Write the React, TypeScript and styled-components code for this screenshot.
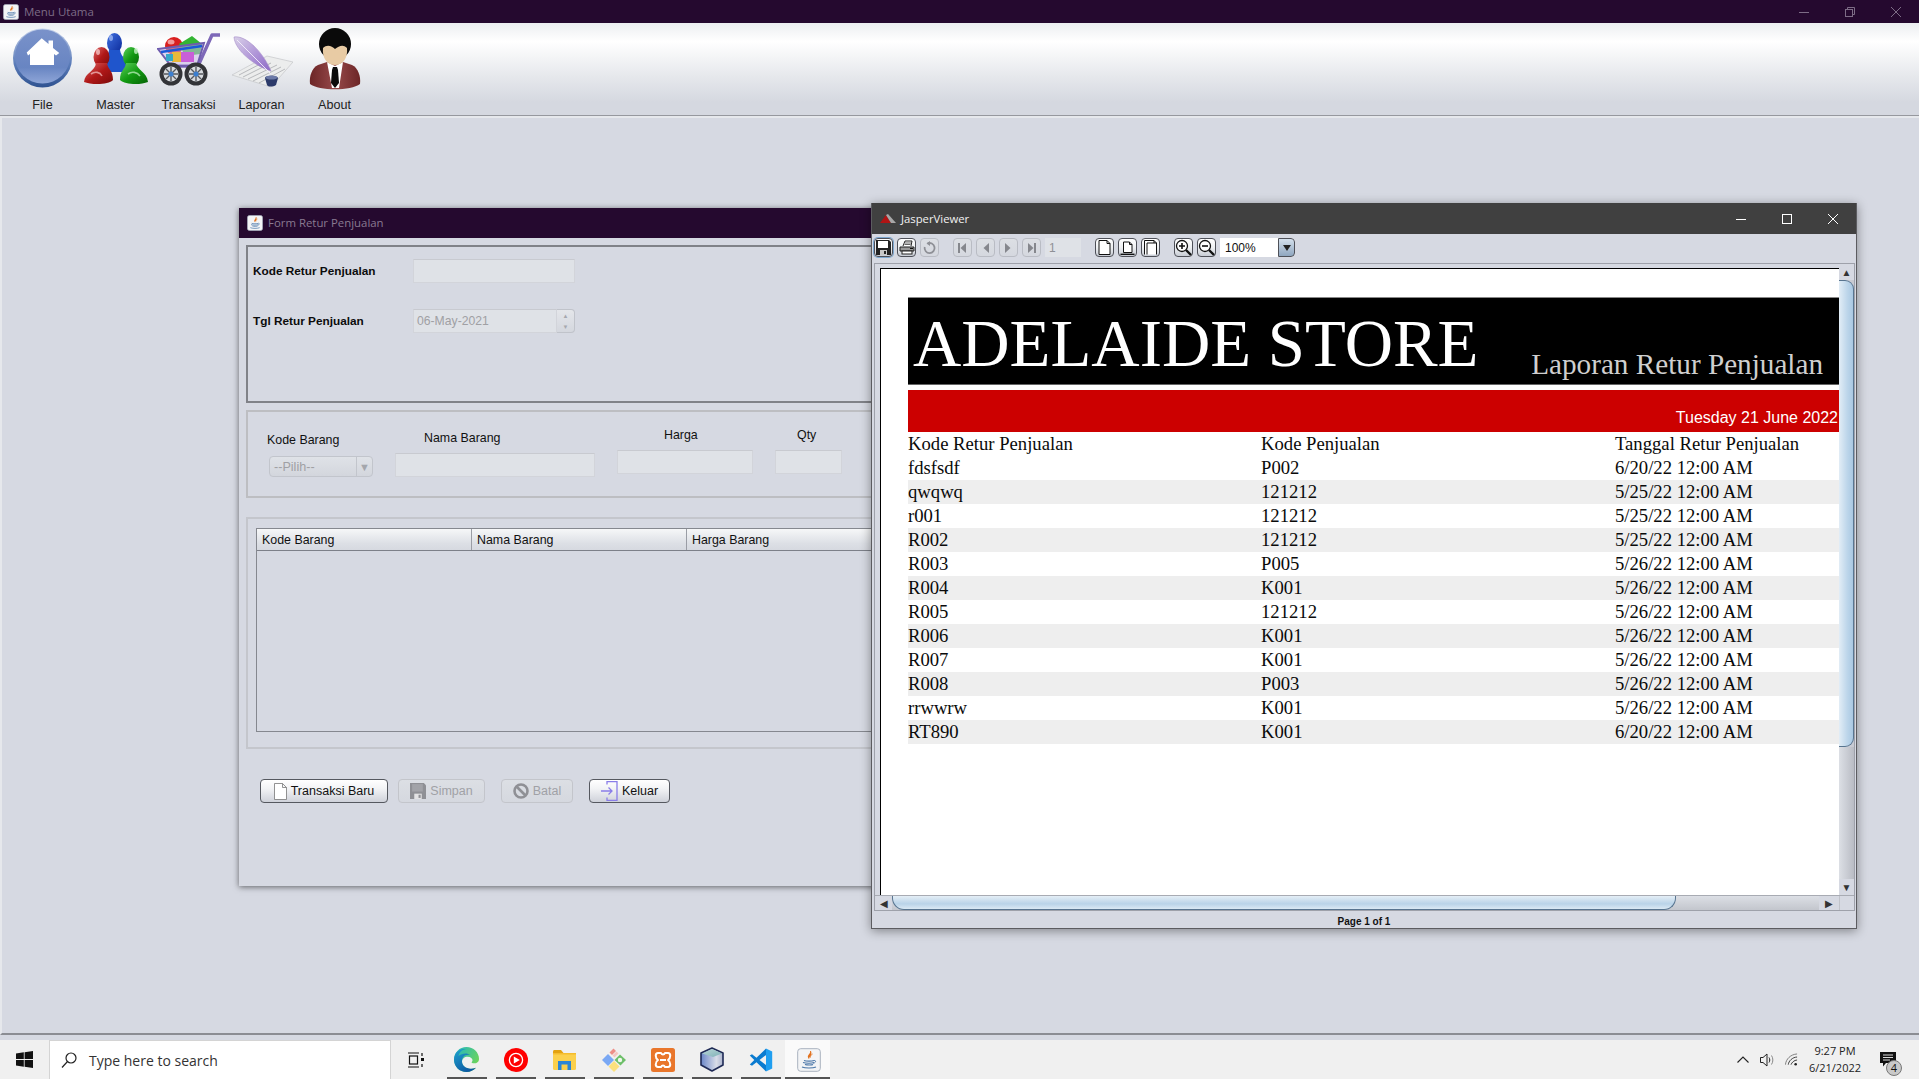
import React from 'react'
import styled, { createGlobalStyle } from 'styled-components'

const GlobalStyle = createGlobalStyle`
  html, body {
    margin: 0;
    padding: 0;
    background: #d6d9e2;
    overflow: hidden;
  }
  * {
    box-sizing: border-box;
  }
`

const Screen = styled.div`
  width: 1919px;
  height: 1079px;
  display: flex;
  flex-direction: column;
  font-family: 'Liberation Sans', Arial, sans-serif;
  font-size: 12px;
  color: #111;
  overflow: hidden;
`

const AppTitleBar = styled.div`
  height: 23px;
  flex: none;
  display: flex;
  align-items: center;
  background: #25092f;
  color: #7d6c86;
  font-family: 'Open Sans', sans-serif;
  font-size: 11.5px;
  padding-left: 3px;
`

const TitleText = styled.span`
  margin-left: 5px;
  flex: 1;
`

const WinControl = styled.div<{ $dark?: boolean }>`
  width: 46px;
  display: flex;
  justify-content: center;
  align-items: center;
  color: ${(p) => (p.$dark ? '#7d6c86' : '#ffffff')};
`

const MenuBar = styled.div`
  height: 93px;
  flex: none;
  display: flex;
  padding-left: 6px;
  background: linear-gradient(#eceef1 0, #ffffff 20%, #e6e8ec 58%, #d5d8e0 86%);
  border-bottom: 1px solid #96989e;
`

const MenuItem = styled.div`
  width: 73px;
  display: flex;
  flex-direction: column;
  align-items: center;
`

const MenuIconBox = styled.div<{ $pb: number }>`
  height: 70px;
  display: flex;
  align-items: flex-end;
  padding-bottom: ${(p) => p.$pb}px;
`

const MenuLabel = styled.div`
  margin-top: 5px;
  font-size: 12.6px;
  color: #222;
  line-height: 14px;
`

const Desktop = styled.div`
  position: relative;
  flex: 1;
  background: #d6d9e2;
  border-top: 2px solid #e6e8ec;
  border-left: 2px solid #e6e8ec;
  border-bottom: 2px solid #8b8d93;
  margin-bottom: 5px;
`

/* windows sit on the desktop at free positions */
const FormWindow = styled.div`
  position: absolute;
  left: 237px;
  top: 90px;
  width: 700px;
  height: 678px;
  background: #d6d9e2;
  box-shadow: 0 1px 6px rgba(0, 0, 0, 0.55);
  overflow: hidden;
`

const FormTitle = styled.div`
  height: 30px;
  display: flex;
  align-items: center;
  padding: 0 0 1px 8px;
  background: #25092f;
  color: #897a91;
  font-family: 'Open Sans', sans-serif;
  font-size: 11.4px;
`

const FormTitleText = styled.span`
  margin-left: 5px;
`

const FormBody = styled.div`
  padding: 7px 0 0 7px;
  display: flex;
  flex-direction: column;
  width: 900px;
`

const HeadPanel = styled.div`
  height: 158px;
  border: 2px solid #808288;
  padding: 12px 0 0 5px;
  display: flex;
  flex-direction: column;
  gap: 26px;
`

const HeadRow = styled.div`
  display: flex;
  align-items: center;
`

const BoldLabel = styled.div`
  width: 160px;
  font-weight: 700;
  font-size: 11.8px;
  color: #0c0c0c;
`

const DisabledInput = styled.div<{ $w: number; $h?: number }>`
  width: ${(p) => p.$w}px;
  height: ${(p) => p.$h ?? 24}px;
  flex: none;
  background: #dfe2e7;
  border: 1px solid #d2d4da;
  border-top-color: #c8cad0;
  color: #a0a0a4;
  padding-left: 3px;
  display: flex;
  align-items: center;
  font-size: 12.2px;
`

const Spinner = styled.div`
  width: 18px;
  height: 24px;
  display: flex;
  flex-direction: column;
  border: 1px solid #c0c3ca;
  border-left: 0;
  border-radius: 0 4px 4px 0;
  background: linear-gradient(#e4e6ea, #d4d7de);
  color: #a6a8ae;
  font-size: 6px;
  align-items: center;
  justify-content: space-around;
`

const EntryPanel = styled.div`
  height: 88px;
  margin-top: 7px;
  border: 2px solid #bdbec2;
  padding-left: 19px;
  display: flex;
  gap: 22px;
`

const Field = styled.div<{ $top: number; $gap: number }>`
  display: flex;
  flex-direction: column;
  padding-top: ${(p) => p.$top}px;
  gap: ${(p) => p.$gap}px;
`

const FieldLabel = styled.div<{ $indent: number }>`
  margin-left: ${(p) => p.$indent}px;
  line-height: 14px;
  font-size: 12.4px;
  color: #111;
`

const Combo = styled.div`
  width: 104px;
  height: 21px;
  margin-left: 2px;
  display: flex;
  align-items: center;
  justify-content: space-between;
  border: 1px solid #c2c5cc;
  border-radius: 4px;
  background: linear-gradient(#dfe2e7, #d3d6dd);
  color: #a0a0a4;
  font-size: 12.6px;
  padding-left: 4px;
`

const ComboArrow = styled.div`
  width: 16px;
  height: 100%;
  border-left: 1px solid #c2c5cc;
  display: flex;
  align-items: center;
  justify-content: center;
  color: #a4a6ac;
  font-size: 11px;
`

const TablePanel = styled.div`
  height: 232px;
  margin-top: 19px;
  border: 2px solid #c4c6cc;
  border-right: 0;
  padding: 9px 0 0 8px;
`

const TableFrame = styled.div`
  height: 204px;
  border: 1px solid #85888f;
`

const TableHead = styled.div`
  height: 22px;
  display: flex;
  border-bottom: 1px solid #7d8089;
  background: linear-gradient(#f6f7f8, #dcdfe5 70%, #d6d9e0);
`

const TableHeadCell = styled.div`
  width: 215px;
  padding-left: 5px;
  display: flex;
  align-items: center;
  border-right: 1px solid #9a9da5;
  font-size: 12.4px;
`

const ButtonRow = styled.div`
  display: flex;
  margin: 30px 0 0 14px;
`

const ActionButton = styled.button<{ $w: number; $ml?: number }>`
  width: ${(p) => p.$w}px;
  height: 24px;
  margin-left: ${(p) => p.$ml ?? 0}px;
  display: flex;
  align-items: center;
  justify-content: center;
  gap: 4px;
  padding: 0;
  font-family: 'Liberation Sans', Arial, sans-serif;
  font-size: 12.5px;
  color: #111;
  border: 1px solid #55585f;
  border-radius: 4px;
  background: linear-gradient(#ffffff, #f2f3f5 40%, #cfd2da);
  &:disabled {
    color: #a0a1a6;
    border-color: #c3c5cb;
    background: linear-gradient(#dcdfe4, #d5d8df);
  }
`

const JasperWindow = styled.div`
  position: absolute;
  left: 869px;
  top: 85px;
  width: 986px;
  height: 726px;
  display: flex;
  flex-direction: column;
  background: #d6d9e2;
  border: 1px solid #5c5c60;
  border-top: 0;
  box-shadow: 0 2px 10px rgba(0, 0, 0, 0.4);
`

const JasperTitle = styled.div`
  height: 31px;
  flex: none;
  display: flex;
  align-items: center;
  padding-left: 8px;
  background: #404040;
  color: #f2f2f2;
  font-family: 'Open Sans', sans-serif;
  font-size: 11.3px;
`

const JasperTitleText = styled.span`
  margin-left: 5px;
  flex: 1;
`

const Toolbar = styled.div`
  height: 29px;
  flex: none;
  display: flex;
  align-items: center;
  gap: 14px;
  padding: 0 0 2px 2px;
`

const ToolGroup = styled.div`
  display: flex;
  gap: 4px;
`

const ToolButton = styled.div<{ $off?: boolean; $focus?: boolean }>`
  width: 19px;
  height: 19px;
  display: flex;
  align-items: center;
  justify-content: center;
  border-radius: 4px;
  border: 1px solid ${(p) => (p.$off ? '#b9bcc4' : '#4e5058')};
  background: ${(p) =>
    p.$off ? 'linear-gradient(#dcdfe4, #d5d8df)' : 'linear-gradient(#ffffff, #eef0f2 50%, #c8ccd4)'};
  color: ${(p) => (p.$off ? '#8e9096' : '#111')};
  box-shadow: ${(p) => (p.$focus ? '0 0 0 1px #7da7cf' : 'none')};
`

const PageInput = styled.div`
  width: 36px;
  height: 19px;
  padding-left: 4px;
  display: flex;
  align-items: center;
  background: #dfe2e7;
  color: #8e9096;
  font-size: 12px;
`

const ZoomCombo = styled.div`
  width: 75px;
  height: 19px;
  display: flex;
  border-radius: 0 4px 4px 0;
  background: #fff;
`

const ZoomValue = styled.div`
  flex: 1;
  padding-left: 5px;
  display: flex;
  align-items: center;
  font-size: 12px;
`

const ZoomArrow = styled.div`
  width: 17px;
  display: flex;
  align-items: center;
  justify-content: center;
  border: 1px solid #4e5058;
  border-radius: 0 4px 4px 0;
  background: linear-gradient(#d4e0ec, #8fa6bf);
`

const ArrowDown = styled.div`
  width: 0;
  height: 0;
  border-left: 4px solid transparent;
  border-right: 4px solid transparent;
  border-top: 6px solid #222;
`

const ViewerFrame = styled.div`
  height: 648px;
  flex: none;
  margin: 0 1px 0 2px;
  border: 1px solid #9ea1aa;
  display: flex;
  flex-direction: column;
`

const ViewerMain = styled.div`
  flex: 1;
  display: flex;
  min-height: 0;
`

const PageArea = styled.div`
  flex: 1;
  padding: 4px 0 0 5px;
`

const Page = styled.div`
  height: 100%;
  background: #fff;
  border-top: 1px solid #000;
  border-left: 1px solid #000;
  padding: 28px 0 0 27px;
`

const Banner = styled.div`
  height: 88px;
  display: flex;
  justify-content: space-between;
  background: #000;
  border-top: 1px solid #888;
  border-bottom: 1px solid #666;
  font-family: 'Liberation Serif', 'Times New Roman', serif;
`

const StoreName = styled.div`
  color: #fff;
  font-size: 66.9px;
  line-height: 76px;
  padding: 7px 0 0 5px;
`

const ReportName = styled.div`
  color: #cfcfcf;
  font-size: 29.2px;
  line-height: 34px;
  padding: 49px 16px 0 0;
`

const DateBand = styled.div`
  height: 42px;
  margin-top: 5px;
  background: #cc0000;
  color: #fff;
  font-size: 16px;
  display: flex;
  align-items: flex-end;
  justify-content: flex-end;
  padding: 0 1px 5px 0;
`

const Row = styled.div<{ $alt?: boolean }>`
  height: 24px;
  display: grid;
  grid-template-columns: 353px 354px 1fr;
  align-items: center;
  font-family: 'Liberation Serif', 'Times New Roman', serif;
  font-size: 18.67px;
  color: #0a0a0a;
  background: ${(p) => (p.$alt ? '#eeeeee' : 'transparent')};
`

const VScroll = styled.div`
  width: 15px;
  flex: none;
  display: flex;
  flex-direction: column;
  background: linear-gradient(90deg, #d6d9e2, #c6c9d1);
`

const ScrollBtn = styled.div<{ $h?: number; $w?: number }>`
  height: ${(p) => (p.$h ? p.$h + 'px' : 'auto')};
  width: ${(p) => (p.$w ? p.$w + 'px' : 'auto')};
  flex: none;
  display: flex;
  align-items: center;
  justify-content: center;
  color: #333;
  font-size: 10px;
  background: #d6d9e2;
`

const VThumb = styled.div`
  height: 467px;
  flex: none;
  border: 1px solid #587590;
  border-left: 0;
  border-radius: 0 9px 9px 0;
  background: linear-gradient(90deg, #e2edf6, #bcd5ea 60%, #a9c8e2);
`

const VTrack = styled.div`
  flex: 1;
  background: linear-gradient(90deg, #dcdfe5, #b9bcc4);
`

const HScroll = styled.div`
  height: 15px;
  flex: none;
  display: flex;
  background: linear-gradient(#dcdfe5, #c3c6cd);
  border-top: 1px solid #a8abb3;
`

const HThumb = styled.div`
  width: 784px;
  flex: none;
  border: 1px solid #587590;
  border-top: 0;
  border-radius: 0 0 12px 12px;
  background: linear-gradient(#e4eef6, #b9d3e8 60%, #dbe9f4);
`

const HTrack = styled.div`
  flex: 1;
`

const Corner = styled.div`
  width: 15px;
  flex: none;
  background: #d6d9e2;
  border-left: 1px solid #c0c3ca;
`

const StatusBar = styled.div`
  flex: 1;
  display: flex;
  align-items: center;
  justify-content: center;
  font-size: 10px;
  font-weight: 700;
  padding: 3px 0 0 0;
`

const Taskbar = styled.div`
  height: 39px;
  flex: none;
  display: flex;
  background: #f0f0f0;
`

const StartButton = styled.div`
  width: 49px;
  display: flex;
  align-items: center;
  justify-content: center;
  padding-bottom: 1px;
`

const SearchBox = styled.div`
  width: 342px;
  display: flex;
  align-items: center;
  gap: 12px;
  padding-left: 11px;
  background: #fff;
  border: 1px solid #d4d4d4;
  border-bottom: 0;
  font-family: 'Open Sans', sans-serif;
  font-size: 14px;
  color: #333;
`

const Slots = styled.div`
  display: flex;
  margin-left: 2px;
`

const Slot = styled.div<{ $running?: boolean; $active?: boolean }>`
  position: relative;
  width: ${(p) => (p.$active ? '45px' : '49px')};
  display: flex;
  align-items: center;
  justify-content: center;
  padding-left: ${(p) => (p.$active ? '3px' : '0')};
  background: ${(p) => (p.$active ? '#fafafa' : 'transparent')};
  &::after {
    content: '';
    display: ${(p) => (p.$running ? 'block' : 'none')};
    position: absolute;
    bottom: 0;
    left: ${(p) => (p.$active ? '0' : '4.5px')};
    right: ${(p) => (p.$active ? '0' : '4.5px')};
    height: 2px;
    background: #555;
  }
`

const TaskViewWrap = styled.div`
  margin-right: 3px;
  display: flex;
`

const Tray = styled.div`
  margin-left: auto;
  display: flex;
  align-items: center;
  padding-right: 15px;
  color: #222;
`

const TrayIcon = styled.div<{ $w: number }>`
  width: ${(p) => p.$w}px;
  display: flex;
  justify-content: center;
`

const Clock = styled.div`
  width: 74px;
  text-align: center;
  font-family: 'Open Sans', sans-serif;
  font-size: 11px;
  line-height: 17px;
  color: #222;
  padding-bottom: 1px;
`

const NotifyWrap = styled.div`
  position: relative;
  width: 32px;
  height: 20px;
  display: flex;
  align-items: center;
  justify-content: center;
`

const NotifyBadge = styled.div`
  position: absolute;
  left: 14px;
  top: 10px;
  width: 16px;
  height: 16px;
  border-radius: 50%;
  background: #c9c9c9;
  border: 1px solid #777;
  display: flex;
  align-items: center;
  justify-content: center;
  font-family: 'Open Sans', sans-serif;
  font-size: 11px;
  color: #111;
`

/* ---- drawings ---- */

const JavaIcon = ({ size = 16 }: { size?: number }) => (
  <svg width={size} height={size} viewBox="0 0 24 24">
    <rect x="0.7" y="0.7" width="22.6" height="22.6" rx="3" fill="#f3f4f6" stroke="#a9b2bf" />
    <path d="M13 3c1 2.5-3 4-2 6.5.4 1 1.2 1.5 1.2 1.5-.4-2 3.5-3.5 1.8-8z" fill="#e2711d" />
    <path d="M15.5 6c-1.5 1-2.5 2-2 3.5" stroke="#e2711d" strokeWidth="0.9" fill="none" />
    <path d="M7 12.5c2 .8 8 .8 10 0M6 14.5c3 .9 9 .9 11 0M8 16.5c2 .7 7 .7 8 0" stroke="#4a76a8" strokeWidth="1.1" fill="none" />
    <path d="M17 12.5c2-.5 2.5 2-.8 2.8" stroke="#4a76a8" strokeWidth="0.9" fill="none" />
    <path d="M5 19c3 1.4 11 1.4 14 0" stroke="#4a76a8" strokeWidth="1.1" fill="none" />
  </svg>
)

const HomeIcon = () => (
  <svg width="60" height="62" viewBox="12 28 60 62">
    <defs>
      <linearGradient id="homeRim" x1="0" y1="0" x2="0" y2="1">
        <stop offset="0" stopColor="#c3d0ea" />
        <stop offset="0.6" stopColor="#5b7cb9" />
        <stop offset="1" stopColor="#2f5290" />
      </linearGradient>
      <linearGradient id="homeFace" x1="0" y1="0" x2="0" y2="1">
        <stop offset="0" stopColor="#7a92ca" />
        <stop offset="0.7" stopColor="#6885c2" />
        <stop offset="1" stopColor="#8fa6d8" />
      </linearGradient>
    </defs>
    <circle cx="41.5" cy="58" r="29.5" fill="url(#homeRim)" />
    <ellipse cx="41.5" cy="56.5" rx="27.5" ry="27" fill="url(#homeFace)" />
    <path d="M40.7 38.3 L47.5 44 V40.5 H52 V48 L58.3 53 L55 55.5 L53 54 V65 H29 V54 L27 55.5 L25.7 52.5 Z" fill="#fff" />
  </svg>
)

const PeopleIcon = () => (
  <svg width="64" height="54" viewBox="83 32 64 54">
    <defs>
      <linearGradient id="pBlue" x1="0" y1="0" x2="1" y2="1">
        <stop offset="0" stopColor="#3f6fe0" />
        <stop offset="1" stopColor="#0b2a9a" />
      </linearGradient>
      <linearGradient id="pRed" x1="0" y1="0" x2="1" y2="1">
        <stop offset="0" stopColor="#e06a6a" />
        <stop offset="0.5" stopColor="#b01818" />
        <stop offset="1" stopColor="#7c0a0a" />
      </linearGradient>
      <linearGradient id="pGreen" x1="0" y1="0" x2="1" y2="1">
        <stop offset="0" stopColor="#5ed05e" />
        <stop offset="0.5" stopColor="#129a12" />
        <stop offset="1" stopColor="#066406" />
      </linearGradient>
    </defs>
    <ellipse cx="113.5" cy="43" rx="7.5" ry="10" fill="url(#pBlue)" />
    <path d="M108 50 H119 C120 58 128 60 130 72 H100 C100 62 107 58 108 50z" fill="#1f55cc" />
    <ellipse cx="100.5" cy="57" rx="8" ry="10" fill="url(#pRed)" />
    <path d="M95 63 H106 C107 70 112 70 112 80 C108 85 90 85 83 82 C84 72 94 72 95 63z" fill="url(#pRed)" />
    <ellipse cx="130" cy="57" rx="8" ry="10" fill="url(#pGreen)" />
    <path d="M125 63 H135 C136 70 146 72 147 82 C140 85 124 85 119 80 C119 70 124 70 125 63z" fill="url(#pGreen)" />
    <ellipse cx="110" cy="38" rx="2" ry="3" fill="#9db6f2" opacity="0.8" />
    <ellipse cx="97" cy="52" rx="2" ry="3" fill="#f5c4c4" opacity="0.8" />
    <ellipse cx="135" cy="51" rx="2" ry="3" fill="#c5f2c5" opacity="0.8" />
    <path d="M90 74 C94 71 99 72 101 76" stroke="#f5c4c4" strokeWidth="1.6" fill="none" opacity="0.7" />
    <path d="M127 74 C131 71 136 72 139 76" stroke="#c5f2c5" strokeWidth="1.6" fill="none" opacity="0.7" />
  </svg>
)

const Wheel = ({ cx }: { cx: number }) => (
  <g>
    <circle cx={cx} cy="74" r="11.5" fill="#333438" />
    <circle cx={cx} cy="74" r="7.5" fill="#d7dade" />
    <path d={`M${cx - 7} 74H${cx + 7}M${cx} 67V81M${cx - 5} 69L${cx + 5} 79M${cx + 5} 69L${cx - 5} 79`} stroke="#55585e" strokeWidth="1.4" />
    <circle cx={cx} cy="74" r="2.5" fill="#3c7fd0" />
  </g>
)

const CartIcon = () => (
  <svg width="64" height="55" viewBox="156 32 64 55">
    <path d="M219 35 H211 L197 66 H170" fill="none" stroke="#7d68b8" strokeWidth="3.4" strokeLinejoin="round" />
    <circle cx="173" cy="46" r="9" fill="#d92020" />
    <ellipse cx="170" cy="42" rx="3.5" ry="2.5" fill="#f29a9a" />
    <path d="M178 44 L191 36 L201 44 L199 54 L184 56z" fill="#33b533" />
    <path d="M157 49 L203 43 L196 66 H170 Z" fill="#c6b8e6" fillOpacity="0.55" stroke="#6f5cae" strokeWidth="2" />
    <path d="M160 52 L201 46" stroke="#1b58d8" strokeWidth="2.4" />
    <rect x="171" y="52" width="11" height="10" fill="#e8b93c" />
    <rect x="180" y="52" width="13" height="10" fill="#c95fd8" />
    <rect x="165" y="54" width="7" height="7" fill="#35a8c8" />
    <Wheel cx={170} />
    <Wheel cx={195} />
  </svg>
)

const QuillIcon = () => (
  <svg width="62" height="54" viewBox="230 34 62 54">
    <defs>
      <linearGradient id="feather" x1="0" y1="0" x2="1" y2="1">
        <stop offset="0" stopColor="#d8cfe8" />
        <stop offset="0.6" stopColor="#ab8fd6" />
        <stop offset="1" stopColor="#8d6cc6" />
      </linearGradient>
    </defs>
    <path d="M231 75 L266 56 L292 62 L270 87 Z" fill="#eceded" stroke="#c4c5c8" strokeWidth="0.7" />
    <path d="M238 75 L265 61M242 77 L270 63M247 79 L276 65M252 81 L280 67M258 83 L284 69" stroke="#a9abaf" strokeWidth="0.8" />
    <path d="M233 37 C245 35 262 52 270 71 C258 68 234 52 233 37z" fill="url(#feather)" stroke="#a48bc8" strokeWidth="0.6" />
    <path d="M236 40 L270 74" stroke="#f4f0fa" strokeWidth="0.9" />
    <path d="M264 78 C264 75 276 75 277 78 L275 85 C272 87 267 87 266 85z" fill="#2c3a6a" />
    <ellipse cx="270.5" cy="77.5" rx="6" ry="2" fill="#6c7aa8" />
  </svg>
)

const ManIcon = () => (
  <svg width="52" height="64" viewBox="308 27 52 64">
    <defs>
      <linearGradient id="jacket" x1="0" y1="0" x2="1" y2="0">
        <stop offset="0" stopColor="#6c2526" />
        <stop offset="0.5" stopColor="#96494a" />
        <stop offset="1" stopColor="#6c2526" />
      </linearGradient>
    </defs>
    <path d="M309 84 C308 76 311 68 317 65 L326 62 H342 L351 65 C357 68 360 76 359 84 C350 91 318 91 309 84z" fill="url(#jacket)" />
    <path d="M326 62 L331 88 H338 L342 62 L334 66z" fill="#fff" />
    <path d="M332 67 H336 L337 70 L338 83 L334 88 L330 83 L331 70z" fill="#0c0c0c" />
    <circle cx="334" cy="44" r="16" fill="#0a0a0a" />
    <path d="M322 48 C326 44 331 46 334 49 C338 46 342 44 346 48 C347 58 342 65 334 65 C326 65 321 58 322 48z" fill="#e8cba4" />
  </svg>
)

const WindowsLogo = () => (
  <svg width="17" height="17" viewBox="0 0 17 17" fill="#111">
    <path d="M0 2.4 L7.8 1.3 V8 H0z" />
    <path d="M8.6 1.2 L17 0 V8 H8.6z" />
    <path d="M0 9 H7.8 V15.7 L0 14.6z" />
    <path d="M8.6 9 H17 V17 L8.6 15.8z" />
  </svg>
)

const SearchGlass = () => (
  <svg width="16" height="17" viewBox="0 0 16 17" fill="none" stroke="#222" strokeWidth="1.2">
    <circle cx="10" cy="6" r="5" />
    <path d="M6.5 9.5 L1 15.5" />
  </svg>
)

const TaskViewIcon = () => (
  <svg width="16" height="16" viewBox="0 0 16 16" fill="none" stroke="#111" strokeWidth="1.2">
    <path d="M0 1h11M0 15h11" />
    <rect x="1.5" y="4" width="8" height="8" />
    <path d="M14 1v3M14 12v3" />
    <rect x="13" y="6" width="3" height="3" fill="#111" stroke="none" />
  </svg>
)

const EdgeIcon = () => (
  <svg width="25" height="25" viewBox="0 0 25 25">
    <defs>
      <linearGradient id="edgeA" x1="0" y1="0" x2="0.6" y2="1">
        <stop offset="0" stopColor="#1fa3cf" />
        <stop offset="1" stopColor="#0c59a4" />
      </linearGradient>
      <linearGradient id="edgeB" x1="0" y1="0" x2="1" y2="0.6">
        <stop offset="0" stopColor="#1db4c7" />
        <stop offset="1" stopColor="#6fd558" />
      </linearGradient>
    </defs>
    <path d="M12.5 0C5.5 0 0 5.5 0 12.5S5.5 25 12.5 25c4 0 7-1.5 9.5-4.2-7 3-14 -.5-14-6 0-3 2.5-5 5.5-5 3.4 0 5 2 5 3.5 0 1-.6 1.8-1 2.2 2 1.6 7.5 1.3 7.5-3.5C25 5.5 19.5 0 12.5 0z" fill="url(#edgeB)" />
    <path d="M1 8C3 3 8 1.5 12 2c-5 1-7 4-7.5 7 3-3 9-3.5 12-1-6-1-8.5 2-8.5 6.5 0 5 6 9 14 6.3-2.5 2.7-5.5 4.2-9.5 4.2C5.5 25 0 19.5 0 12.5 0 11 .4 9.5 1 8z" fill="url(#edgeA)" />
  </svg>
)

const YtMusicIcon = () => (
  <svg width="24" height="24" viewBox="0 0 24 24">
    <circle cx="12" cy="12" r="12" fill="#f00" />
    <circle cx="12" cy="12" r="6.6" fill="none" stroke="#fff" strokeWidth="1.3" />
    <path d="M9.8 8.5 L15.8 12 L9.8 15.5z" fill="#fff" />
  </svg>
)

const ExplorerIcon = () => (
  <svg width="23" height="20" viewBox="0 0 23 20">
    <path d="M0 1.5C0 .6.6 0 1.5 0H8l2.5 3H0z" fill="#e3a210" />
    <rect x="0" y="3" width="23" height="17" rx="1.5" fill="#fbd04c" />
    <rect x="0" y="3" width="23" height="1.5" fill="#f5bc2c" />
    <path d="M5 11 H18 V20 H14.5 V14.5 H8.5 V20 H5z" fill="#2b86d6" />
  </svg>
)

const DiamondsIcon = () => (
  <svg width="24" height="24" viewBox="0 0 24 24">
    <path d="M0 12 L6 6 L12 12 L6 18z" fill="#7aa8f4" />
    <path d="M7.5 4.5 L11.5 .5 L14 3 L10 7z" fill="#ee8e86" />
    <path d="M10.5 7.5 L14.5 3.5 L16.5 5.5 L12.5 9.5z" fill="#f5c6c0" />
    <path d="M12.5 12 L18 6.5 L24 12 L18.5 17.5z" fill="#6dbf69" />
    <circle cx="18" cy="12" r="2.2" fill="#f2f7ee" />
    <path d="M6.5 18.5 L12 13 L17.5 18.5 L12 24z" fill="#fbe07c" />
  </svg>
)

const XamppIcon = () => (
  <svg width="24" height="24" viewBox="0 0 24 24">
    <rect width="24" height="24" rx="2.5" fill="#e9762b" />
    <path d="M7 5 H10 C11 7 13 7 14 5 H17 C20 5 20 10 17 12 C20 14 20 19 17 19 H14 C13 17 11 17 10 19 H7 C4 19 4 14 7 12 C4 10 4 5 7 5z M9 12 H15" fill="none" stroke="#fff" strokeWidth="2" strokeLinejoin="round" />
  </svg>
)

const CubeIcon = () => (
  <svg width="24" height="25" viewBox="0 0 24 25">
    <defs>
      <linearGradient id="cubeTop" x1="0" y1="0" x2="1" y2="1">
        <stop offset="0" stopColor="#b9d6d6" />
        <stop offset="1" stopColor="#7fb1b8" />
      </linearGradient>
      <linearGradient id="cubeSide" x1="0" y1="0" x2="1" y2="0">
        <stop offset="0" stopColor="#6a86c8" />
        <stop offset="0.7" stopColor="#d9dde8" />
        <stop offset="1" stopColor="#aab2cc" />
      </linearGradient>
    </defs>
    <path d="M12 1 L23 6 V18 L12 24 L1 18 V6z" fill="url(#cubeSide)" stroke="#1f2a55" strokeWidth="1.6" strokeLinejoin="round" />
    <path d="M12 2 L22 6.5 L13 10 L2 6.5z" fill="url(#cubeTop)" />
  </svg>
)

const VsCodeIcon = () => (
  <svg width="24" height="24" viewBox="0 0 24 24">
    <path d="M17 .5 L7.5 9.8 L3 6.3 L.8 7.5 L5.3 12 L.8 16.5 L3 17.7 L7.5 14.2 L17 23.5z M17 7 L10.5 12 L17 17z" fill="#0a7bd0" fillRule="evenodd" />
    <path d="M17 .5 L23.2 3.5 V20.5 L17 23.5z" fill="#1f9ef0" />
  </svg>
)

const SpeakerIcon = () => (
  <svg width="15" height="14" viewBox="0 0 15 14" fill="none" stroke="#222" strokeWidth="1">
    <path d="M.5 4.5 H3 L7 1 V13 L3 9.5 H.5z" />
    <path d="M9 4.5c1 1.5 1 3.5 0 5" />
    <path d="M11.5 2.5c1.8 2.8 1.8 6.2 0 9" stroke="#888" />
  </svg>
)

const WifiIcon = () => (
  <svg width="14" height="14" viewBox="0 0 14 14" fill="none" stroke="#333" strokeWidth="1">
    <path d="M.5 12C1 6 6 1 13 .5" stroke="#777" />
    <path d="M3.5 12C4 8 8 4 13 3.8" />
    <path d="M6.5 12C7 10 10 7 13 7" />
    <circle cx="11.5" cy="11.5" r="1.4" fill="#222" stroke="none" />
  </svg>
)

const ChevronIcon = () => (
  <svg width="12" height="7" viewBox="0 0 12 7" fill="none" stroke="#222" strokeWidth="1.1">
    <path d="M.5 6.5 L6 1 L11.5 6.5" />
  </svg>
)

const NotifyIcon = () => (
  <svg width="16" height="15" viewBox="0 0 16 15">
    <path d="M0 0 H16 V11 H6 L3 14.5 V11 H0z" fill="#111" />
    <path d="M3 3 H13M3 5.5 H13M3 8 H10" stroke="#f0f0f0" strokeWidth="0.9" />
  </svg>
)

const MinGlyph = () => (
  <svg width="10" height="10" viewBox="0 0 10 10" stroke="currentColor" fill="none">
    <path d="M0 5.5 H10" />
  </svg>
)

const MaxGlyph = () => (
  <svg width="10" height="10" viewBox="0 0 10 10" stroke="currentColor" fill="none">
    <rect x="0.5" y="0.5" width="9" height="9" />
  </svg>
)

const RestoreGlyph = () => (
  <svg width="10" height="10" viewBox="0 0 10 10" stroke="currentColor" fill="none">
    <rect x="0.5" y="2.5" width="7" height="7" />
    <path d="M2.5 2.5 V.5 H9.5 V7.5 H7.5" />
  </svg>
)

const CloseGlyph = () => (
  <svg width="10" height="10" viewBox="0 0 10 10" stroke="currentColor" fill="none">
    <path d="M0 0 L10 10M10 0 L0 10" />
  </svg>
)

const JasperLogo = () => (
  <svg width="16" height="9" viewBox="0 0 16 9">
    <path d="M0 9 L6 1 L11 9z" fill="#b01414" />
    <path d="M6 1 L8 0 L16 9 H11z" fill="#a8a8a8" />
  </svg>
)

const FloppyIcon = ({ fill = '#222', pane = '#fff', size = 15 }: { fill?: string; pane?: string; size?: number }) => (
  <svg width={size} height={size} viewBox="0 0 15 15">
    <path d="M0 0 H13 L15 2 V15 H0z" fill={fill} />
    <rect x="2" y="1" width="10" height="7" fill={pane} />
    <rect x="4" y="10" width="7" height="5" fill="#fff" opacity="0.75" />
    <rect x="8" y="11" width="2" height="3" fill={fill} />
  </svg>
)

const PrinterIcon = () => (
  <svg width="16" height="15" viewBox="0 0 16 15" fill="none" stroke="#222" strokeWidth="1">
    <path d="M4 6 L6 1 H13 L12 6" fill="#fff" />
    <path d="M6 3 H12M5.5 4.5 H11.5" strokeWidth="0.7" />
    <path d="M1 7 H15 V11 H1z" fill="#999" />
    <rect x="3" y="11" width="10" height="3" fill="#fff" />
    <path d="M11 8.5 H14" stroke="#111" />
  </svg>
)

const ReloadIcon = () => (
  <svg width="13" height="13" viewBox="0 0 13 13" fill="none" stroke="#8e9096" strokeWidth="1.8">
    <path d="M4.5 2.5 A5 5 0 1 1 1.7 6" />
    <path d="M7 0 L3.5 2.5 L7 5" fill="#8e9096" stroke="none" />
  </svg>
)

const NavIcon = ({ kind }: { kind: 'first' | 'prev' | 'next' | 'last' }) => (
  <svg width="9" height="10" viewBox="0 0 9 10" fill="#85878d">
    {kind === 'first' && <rect x="0" y="0" width="2" height="10" />}
    {kind === 'last' && <rect x="7" y="0" width="2" height="10" />}
    {(kind === 'first' || kind === 'prev') && <path d="M8 0 V10 L2.5 5z" />}
    {(kind === 'next' || kind === 'last') && <path d="M1 0 V10 L6.5 5z" />}
  </svg>
)

const PageGlyph = ({ kind }: { kind: 'actual' | 'width' | 'page' }) => (
  <svg width="15" height="15" viewBox="0 0 15 15" fill="#fff" stroke="#111" strokeWidth="1">
    {kind === 'actual' && <path d="M2 .5 H10 L13 3.5 V14.5 H2z M10 .5 V3.5 H13" />}
    {kind === 'width' && (
      <>
        <path d="M3.5 2 H9.5 L12 4.5 V12.5 H3.5z M9.5 2 V4.5 H12" />
        <path d="M.5 14.3 H14.5" strokeWidth="1.4" />
      </>
    )}
    {kind === 'page' && <path d="M1.5 14.5 V.5 H11 L13.5 3 V14.5 M11 .5 V3 H13.5 M4 14.5 V3 H11" />}
  </svg>
)

const ZoomGlyph = ({ plus }: { plus?: boolean }) => (
  <svg width="17" height="17" viewBox="0 0 17 17" fill="none" stroke="#111" strokeWidth="1.3">
    <circle cx="7" cy="7" r="5.5" fill="#fff" />
    <path d="M11 11 L16 16" strokeWidth="2.4" />
    <path d={plus ? 'M4 7 H10M7 4 V10' : 'M4 7 H10'} strokeWidth="1.6" />
  </svg>
)

const PaperGlyph = () => (
  <svg width="13" height="17" viewBox="0 0 13 17" fill="#fff" stroke="#777" strokeWidth="0.8">
    <path d="M.5 .5 H8.5 L12.5 4.5 V16.5 H.5z M8.5 .5 V4.5 H12.5" />
  </svg>
)

const BanGlyph = () => (
  <svg width="16" height="16" viewBox="0 0 16 16" fill="none" stroke="#8f9095" strokeWidth="2.6">
    <circle cx="8" cy="8" r="6.5" />
    <path d="M3.5 3.5 L12.5 12.5" />
  </svg>
)

const ExitGlyph = () => (
  <svg width="17" height="20" viewBox="0 0 17 20" fill="none" stroke="#8a7ee8" strokeWidth="1.3">
    <path d="M6 3.5 V.7 H16 V19.3 H6 V16.5" />
    <path d="M0 10 H11M7.5 6.5 L11 10 L7.5 13.5" />
  </svg>
)

const menuItems = [
  { label: 'File', pb: 3, icon: <HomeIcon /> },
  { label: 'Master', pb: 7, icon: <PeopleIcon /> },
  { label: 'Transaksi', pb: 6, icon: <CartIcon /> },
  { label: 'Laporan', pb: 5, icon: <QuillIcon /> },
  { label: 'About', pb: 2, icon: <ManIcon /> },
]

const rows = [
  ['fdsfsdf', 'P002', '6/20/22 12:00 AM'],
  ['qwqwq', '121212', '5/25/22 12:00 AM'],
  ['r001', '121212', '5/25/22 12:00 AM'],
  ['R002', '121212', '5/25/22 12:00 AM'],
  ['R003', 'P005', '5/26/22 12:00 AM'],
  ['R004', 'K001', '5/26/22 12:00 AM'],
  ['R005', '121212', '5/26/22 12:00 AM'],
  ['R006', 'K001', '5/26/22 12:00 AM'],
  ['R007', 'K001', '5/26/22 12:00 AM'],
  ['R008', 'P003', '5/26/22 12:00 AM'],
  ['rrwwrw', 'K001', '5/26/22 12:00 AM'],
  ['RT890', 'K001', '6/20/22 12:00 AM'],
]

const App = () => (
  <Screen>
    <GlobalStyle />
    <AppTitleBar>
      <JavaIcon />
      <TitleText>Menu Utama</TitleText>
      <WinControl $dark><MinGlyph /></WinControl>
      <WinControl $dark><RestoreGlyph /></WinControl>
      <WinControl $dark><CloseGlyph /></WinControl>
    </AppTitleBar>

    <MenuBar>
      {menuItems.map((item) => (
        <MenuItem key={item.label}>
          <MenuIconBox $pb={item.pb}>{item.icon}</MenuIconBox>
          <MenuLabel>{item.label}</MenuLabel>
        </MenuItem>
      ))}
    </MenuBar>

    <Desktop>
      <FormWindow>
        <FormTitle>
          <JavaIcon />
          <FormTitleText>Form Retur Penjualan</FormTitleText>
        </FormTitle>
        <FormBody>
          <HeadPanel>
            <HeadRow>
              <BoldLabel>Kode Retur Penjualan</BoldLabel>
              <DisabledInput $w={162} />
            </HeadRow>
            <HeadRow>
              <BoldLabel>Tgl Retur Penjualan</BoldLabel>
              <DisabledInput $w={144}>06-May-2021</DisabledInput>
              <Spinner>
                <span>▲</span>
                <span>▼</span>
              </Spinner>
            </HeadRow>
          </HeadPanel>

          <EntryPanel>
            <Field $top={21} $gap={9}>
              <FieldLabel $indent={0}>Kode Barang</FieldLabel>
              <Combo>
                --Pilih--
                <ComboArrow>▼</ComboArrow>
              </Combo>
            </Field>
            <Field $top={19} $gap={8}>
              <FieldLabel $indent={29}>Nama Barang</FieldLabel>
              <DisabledInput $w={200} />
            </Field>
            <Field $top={16} $gap={8}>
              <FieldLabel $indent={47}>Harga</FieldLabel>
              <DisabledInput $w={136} />
            </Field>
            <Field $top={16} $gap={8}>
              <FieldLabel $indent={22}>Qty</FieldLabel>
              <DisabledInput $w={67} />
            </Field>
          </EntryPanel>

          <TablePanel>
            <TableFrame>
              <TableHead>
                <TableHeadCell>Kode Barang</TableHeadCell>
                <TableHeadCell>Nama Barang</TableHeadCell>
                <TableHeadCell>Harga Barang</TableHeadCell>
              </TableHead>
            </TableFrame>
          </TablePanel>

          <ButtonRow>
            <ActionButton $w={128}>
              <PaperGlyph />
              <span>Transaksi Baru</span>
            </ActionButton>
            <ActionButton $w={87} $ml={10} disabled>
              <FloppyIcon fill="#8f9095" pane="#a2a3a8" size={16} />
              <span>Simpan</span>
            </ActionButton>
            <ActionButton $w={72} $ml={16} disabled>
              <BanGlyph />
              <span>Batal</span>
            </ActionButton>
            <ActionButton $w={81} $ml={16}>
              <ExitGlyph />
              <span>Keluar</span>
            </ActionButton>
          </ButtonRow>
        </FormBody>
      </FormWindow>

      <JasperWindow>
        <JasperTitle>
          <JasperLogo />
          <JasperTitleText>JasperViewer</JasperTitleText>
          <WinControl><MinGlyph /></WinControl>
          <WinControl><MaxGlyph /></WinControl>
          <WinControl><CloseGlyph /></WinControl>
        </JasperTitle>

        <Toolbar>
          <ToolGroup>
            <ToolButton $focus><FloppyIcon /></ToolButton>
            <ToolButton><PrinterIcon /></ToolButton>
            <ToolButton $off><ReloadIcon /></ToolButton>
          </ToolGroup>
          <ToolGroup>
            <ToolButton $off><NavIcon kind="first" /></ToolButton>
            <ToolButton $off><NavIcon kind="prev" /></ToolButton>
            <ToolButton $off><NavIcon kind="next" /></ToolButton>
            <ToolButton $off><NavIcon kind="last" /></ToolButton>
            <PageInput>1</PageInput>
          </ToolGroup>
          <ToolGroup>
            <ToolButton><PageGlyph kind="actual" /></ToolButton>
            <ToolButton><PageGlyph kind="width" /></ToolButton>
            <ToolButton><PageGlyph kind="page" /></ToolButton>
          </ToolGroup>
          <ToolGroup>
            <ToolButton><ZoomGlyph plus /></ToolButton>
            <ToolButton><ZoomGlyph /></ToolButton>
            <ZoomCombo>
              <ZoomValue>100%</ZoomValue>
              <ZoomArrow><ArrowDown /></ZoomArrow>
            </ZoomCombo>
          </ToolGroup>
        </Toolbar>

        <ViewerFrame>
          <ViewerMain>
            <PageArea>
              <Page>
                <Banner>
                  <StoreName>ADELAIDE STORE</StoreName>
                  <ReportName>Laporan Retur Penjualan</ReportName>
                </Banner>
                <DateBand>Tuesday 21 June 2022</DateBand>
                <Row>
                  <span>Kode Retur Penjualan</span>
                  <span>Kode Penjualan</span>
                  <span>Tanggal Retur Penjualan</span>
                </Row>
                {rows.map((r, i) => (
                  <Row key={r[0]} $alt={i % 2 === 1}>
                    <span>{r[0]}</span>
                    <span>{r[1]}</span>
                    <span>{r[2]}</span>
                  </Row>
                ))}
              </Page>
            </PageArea>
            <VScroll>
              <ScrollBtn $h={16}>▲</ScrollBtn>
              <VThumb />
              <VTrack />
              <ScrollBtn $h={16}>▼</ScrollBtn>
            </VScroll>
          </ViewerMain>
          <HScroll>
            <ScrollBtn $w={17}>◀</ScrollBtn>
            <HThumb />
            <HTrack />
            <ScrollBtn $w={20}>▶</ScrollBtn>
            <Corner />
          </HScroll>
        </ViewerFrame>

        <StatusBar>Page 1 of 1</StatusBar>
      </JasperWindow>
    </Desktop>

    <Taskbar>
      <StartButton><WindowsLogo /></StartButton>
      <SearchBox>
        <SearchGlass />
        Type here to search
      </SearchBox>
      <Slots>
        <Slot><TaskViewWrap><TaskViewIcon /></TaskViewWrap></Slot>
        <Slot $running><EdgeIcon /></Slot>
        <Slot $running><YtMusicIcon /></Slot>
        <Slot $running><ExplorerIcon /></Slot>
        <Slot $running><DiamondsIcon /></Slot>
        <Slot $running><XamppIcon /></Slot>
        <Slot $running><CubeIcon /></Slot>
        <Slot $running><VsCodeIcon /></Slot>
        <Slot $running $active><JavaIcon size={24} /></Slot>
      </Slots>
      <Tray>
        <TrayIcon $w={12}><ChevronIcon /></TrayIcon>
        <TrayIcon $w={36}><SpeakerIcon /></TrayIcon>
        <TrayIcon $w={13}><WifiIcon /></TrayIcon>
        <Clock>
          9:27 PM
          <br />
          6/21/2022
        </Clock>
        <NotifyWrap>
          <NotifyIcon />
          <NotifyBadge>4</NotifyBadge>
        </NotifyWrap>
      </Tray>
    </Taskbar>
  </Screen>
)

export default App
